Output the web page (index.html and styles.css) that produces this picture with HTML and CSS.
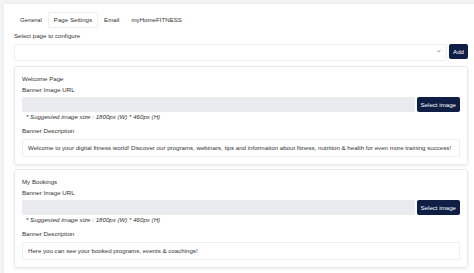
FILE: index.html
```html
<!DOCTYPE html>
<html>
	<head>
		<title>Page Settings</title>
		<meta charset="UTF-8">
		<link rel="stylesheet" href="styles.css">
	</head>
	<body>
		<div class="panel">
			<nav class="tabs">
				<span class="tab">General</span>
				<span class="tab active">Page Settings</span>
				<span class="tab">Email</span>
				<span class="tab">myHomeFITNESS</span>
			</nav>

			<div class="label">Select page to configure</div>
			<div class="select-row">
				<div class="select"><span class="chevron">&#8964;</span></div>
				<button class="btn">Add</button>
			</div>

			<section class="card">
				<div class="card-title">Welcome Page</div>
				<div class="label">Banner Image URL</div>
				<div class="url-row">
					<div class="url-input"></div>
					<button class="btn">Select image</button>
				</div>
				<div class="hint">* Suggested image size : 1800px (W) * 460px (H)</div>
				<div class="label">Banner Description</div>
				<div class="text-input">Welcome to your digital fitness world! Discover our programs, webinars, tips and information about fitness, nutrition &amp; health for even more training success!</div>
			</section>

			<section class="card">
				<div class="card-title">My Bookings</div>
				<div class="label">Banner Image URL</div>
				<div class="url-row">
					<div class="url-input"></div>
					<button class="btn">Select image</button>
				</div>
				<div class="hint">* Suggested image size : 1800px (W) * 460px (H)</div>
				<div class="label">Banner Description</div>
				<div class="text-input">Here you can see your booked programs, events &amp; coachings!</div>
			</section>
		</div>
	</body>
</html>
```

FILE: styles.css
```css
body {
	margin: 0;
	background: #f3f4f6;
	font-family: "Liberation Sans", sans-serif;
	font-size: 6.15px;
	color: #333;
}

.panel {
	margin: 4px 0 0 4px;
	padding: 8px 6px 6px 10px;
	background: #ffffff;
	box-shadow: 0 0 3px rgba(0,0,0,0.08);
	height: 300px;
}

.tabs {
	display: flex;
	height: 16px;
	align-items: center;
	margin-bottom: 3px;
}

.tab {
	padding: 0 5px;
	line-height: 14px;
	border: 1px solid transparent;
}

.active {
	border-color: #eceef0;
	border-radius: 2px 2px 0 0;
}

.label {
	line-height: 10px;
	height: 10px;
}

.select-row {
	display: flex;
	gap: 2px;
	margin-top: 3px;
	margin-bottom: 5px;
}

.select {
	flex: 1;
	height: 15px;
	border: 1px solid #eceef0;
	border-radius: 2px;
	position: relative;
}

.chevron {
	position: absolute;
	right: 4px;
	top: 1px;
	font-size: 7px;
	color: #777;
}

.btn {
	background: #0e1e45;
	color: #fff;
	border: none;
	border-radius: 2px;
	font-family: "Liberation Sans", sans-serif;
	font-size: 6.15px;
	height: 15px;
	padding: 0 4px;
}

.card {
	border: 1px solid #e8e9ec;
	border-radius: 3px;
	box-shadow: 0 1px 3px rgba(0,0,0,0.08);
	padding: 6px 7px 7px 7px;
	margin-bottom: 4px;
}

.card-title {
	line-height: 11px;
	margin-bottom: 1px;
}

.url-row {
	display: flex;
	gap: 2px;
	margin-top: 2px;
}

.url-input {
	flex: 1;
	height: 15px;
	background: #e9eaed;
	border-radius: 2px;
}

.hint {
	font-style: italic;
	padding-left: 4px;
	line-height: 10px;
	margin-bottom: 4px;
}

.text-input {
	border: 1px solid #eceef0;
	border-radius: 2px;
	padding: 0 5px;
	line-height: 16px;
	margin-top: 3px;
	white-space: nowrap;
}
```
